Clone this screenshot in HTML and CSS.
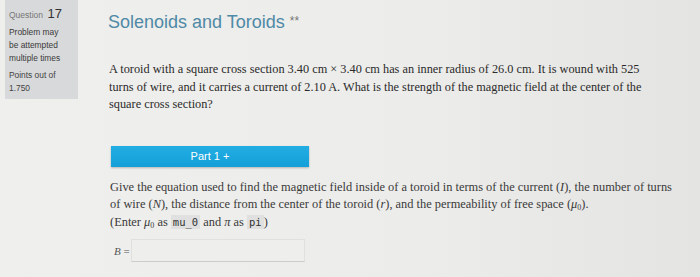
FILE: index.html
```html
<!DOCTYPE html>
<html>
<head>
<meta charset="utf-8">
<link rel="stylesheet" href="styles.css">
</head>
<body>
<div class="page">
  <aside class="side">
    <div class="q"><span class="ql">Question</span> <span class="qn">17</span></div>
    <div class="note">Problem may<br>be attempted<br>multiple times</div>
    <div class="pts">Points out of<br>1.750</div>
  </aside>
  <main class="main">
    <h1 class="title">Solenoids and Toroids <span class="stars">**</span></h1>
    <p class="prob">A toroid with a square cross section 3.40 cm × 3.40 cm has an inner radius of 26.0 cm. It is wound with 525<br>turns of wire, and it carries a current of 2.10 A. What is the strength of the magnetic field at the center of the<br>square cross section?</p>
    <div class="part">Part 1 +</div>
    <p class="ask">Give the equation used to find the magnetic field inside of a toroid in terms of the current (<i>I</i>), the number of turns<br>of wire (<i>N</i>), the distance from the center of the toroid (<i>r</i>), and the permeability of free space (<i>μ</i><sub>0</sub>).<br>(Enter <i>μ</i><sub>0</sub> as <code>mu_0</code> and <i>π</i> as <code>pi</code>)</p>
    <div class="ans"><span class="bl"><i>B</i> =</span><span class="box"></span></div>
  </main>
</div>
</body>
</html>
```
FILE: styles.css
```css
html, body { margin: 0; padding: 0; }
body {
  width: 700px; height: 277px; overflow: hidden;
  background: linear-gradient(90deg, #efefed 0%, #ececea 60%, #e4e4e2 100%);
  font-family: "Liberation Serif", serif;
  color: #2e2e2e;
}
.page { display: flex; align-items: flex-start; }
.side {
  width: 69px; margin-left: 5px; padding: 5px 0 6px 4px;
  background: #d8d9da; height: 88px;
  font-family: "Liberation Sans", sans-serif; color: #3a3a3a;
}
.q { line-height: 15px; }
.ql { font-size: 8.5px; color: #777; }
.qn { font-size: 13px; color: #333; }
.note { font-size: 8.4px; line-height: 13px; margin-top: 3px; color: #3a3a3a; }
.pts { font-size: 8.4px; line-height: 13px; margin-top: 4px; color: #444; }
.main { margin-left: 30px; flex: 1; }
.title {
  font-family: "Liberation Sans", sans-serif; font-weight: normal;
  font-size: 18px; color: #4e89a6; margin: 10px 0 0 0; line-height: 22px;
}
.stars { font-size: 12px; color: #777; vertical-align: 3px; }
.prob { font-size: 12.3px; line-height: 17.5px; margin: 28px 0 0 1px; color: #2a2a2a; }
.part {
  width: 198px; height: 21px; margin: 32px 0 0 3px;
  background: linear-gradient(#22ade3, #159fd8);
  color: #fff; font-family: "Liberation Sans", sans-serif; font-size: 11px;
  text-align: center; line-height: 21px; box-shadow: 0 1px 2px rgba(0,0,0,.25);
}
.ask { font-size: 12.4px; line-height: 17.5px; margin: 12px 0 0 2px; color: #3a3a3a; }
.ask sub { font-size: 8px; line-height: 0; vertical-align: -2px; }
code {
  font-family: "DejaVu Sans Mono", monospace; font-size: 10.5px; line-height: 0;
  background: #dfe0df; padding: 1px 2px; color: #333;
}
.ans { display: flex; align-items: center; margin: 8px 0 0 6px; }
.bl { font-size: 11px; color: #555; width: 17px; }
.box { width: 172px; height: 21px; border: 1px solid #e0e0de; border-bottom-color: #ccc; background: #eeeeec; }
```
